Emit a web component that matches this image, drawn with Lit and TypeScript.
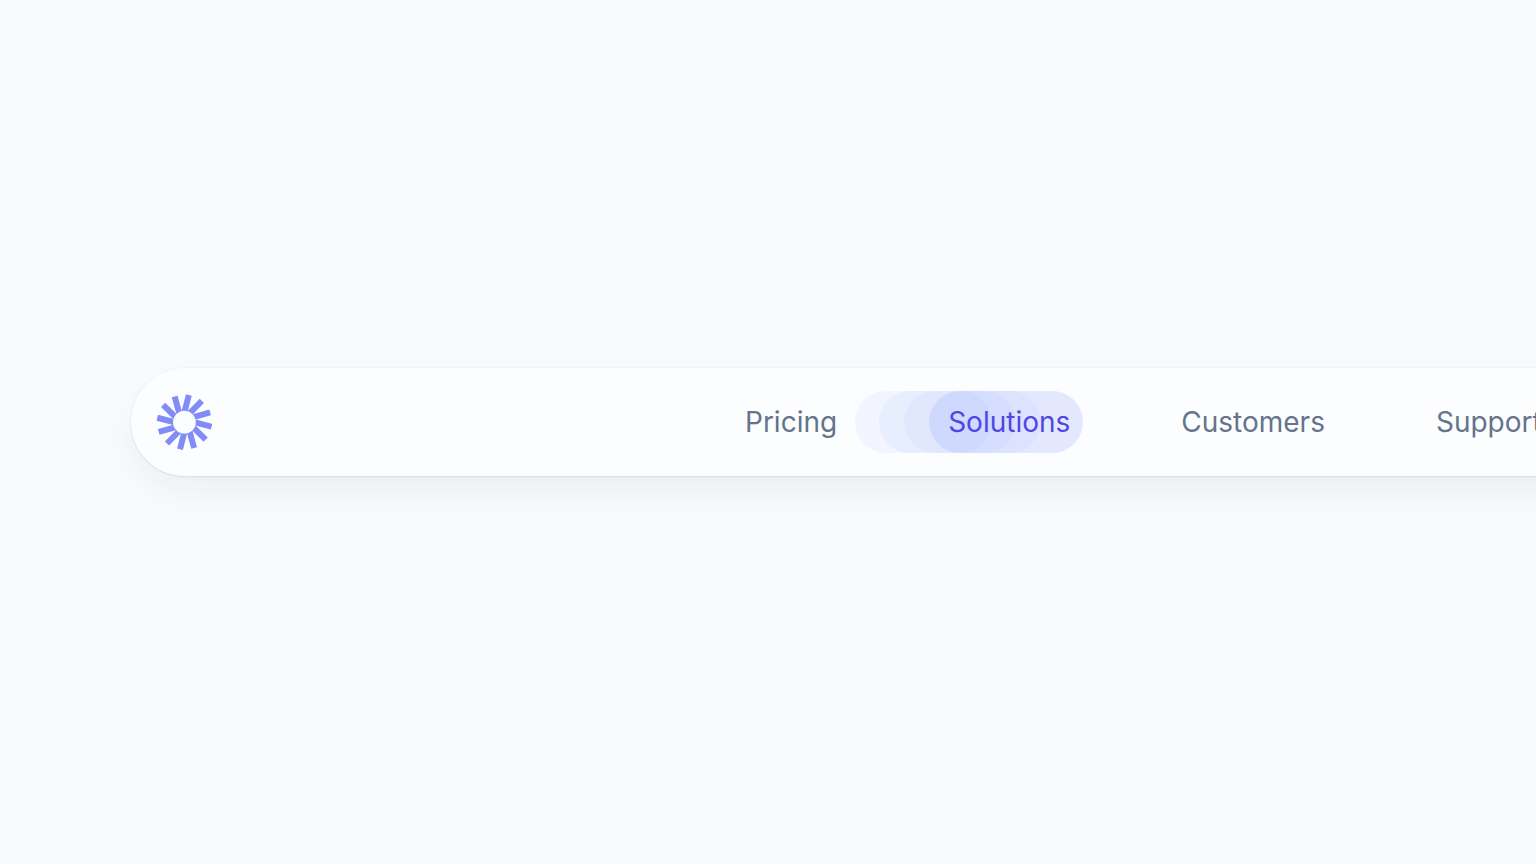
import { LitElement, html, svg, css } from "lit";
import { customElement, property } from "lit/decorators.js";

const RAYS = Array.from({ length: 12 }, (_, i) => 14.5 + i * 30);

@customElement("burst-logo")
class BurstLogo extends LitElement {
  static styles = css`
    :host {
      display: block;
      width: 56px;
      height: 56px;
    }
    .mark {
      display: block;
      width: 100%;
      height: 100%;
      fill: #818cf8;
    }
    .hub {
      fill: #fcfdff;
    }
  `;

  render() {
    return html`
      <svg class="mark" viewBox="-28.4 -28.2 56 56" aria-hidden="true">
        ${RAYS.map(
          (angle) => svg`<rect x="-5.5" y="-27.4" width="6" height="20" transform="rotate(${angle})" />`
        )}
        <circle class="hub" r="11.4" />
      </svg>
    `;
  }
}

@customElement("nav-link")
class NavLink extends LitElement {
  @property() label = "";
  @property({ type: Boolean }) active = false;

  static styles = css`
    :host {
      display: block;
      flex: none;
    }
    .link {
      display: block;
      position: relative;
      color: #64748b;
      line-height: 40px;
      text-decoration: none;
      white-space: nowrap;
    }
    .link.active {
      color: #4f46e5;
    }
    .text {
      position: relative;
    }
    .pill {
      position: absolute;
      top: -11px;
      bottom: -11px;
      left: -19px;
      right: -13px;
      border-radius: 31px;
      background: rgba(165, 184, 255, 0.29);
    }
    .trail {
      right: auto;
      width: 137px;
    }
    .far {
      left: -93px;
      background: rgba(165, 184, 255, 0.11);
    }
    .mid {
      left: -69px;
      background: rgba(165, 190, 245, 0.13);
    }
    .near {
      left: -44px;
      background: rgba(165, 180, 255, 0.09);
    }
  `;

  render() {
    return html`
      <a class="link ${this.active ? "active" : ""}" href="#${this.label.toLowerCase()}">
        ${this.active
          ? html`
              <span class="pill trail far"></span>
              <span class="pill trail mid"></span>
              <span class="pill trail near"></span>
              <span class="pill"></span>
            `
          : null}
        <span class="text">${this.label}</span>
      </a>
    `;
  }
}

@customElement("app-root")
class AppRoot extends LitElement {
  static styles = css`
    :host {
      display: grid;
      grid-template-columns: minmax(0, 1fr);
      align-items: center;
      box-sizing: border-box;
      min-height: 100vh;
      padding: 0 0 20px 131px;
      overflow: hidden;
      background: #f8fafc;
      font-family: Inter, "Liberation Sans", sans-serif;
      font-size: 28px;
      -webkit-font-smoothing: antialiased;
    }
    .bar {
      display: flex;
      align-items: center;
      box-sizing: border-box;
      width: 140%;
      padding: 26px 25px;
      border-radius: 54px;
      background: #fcfdff;
      box-shadow:
        0 0 0 1px rgba(15, 23, 42, 0.02),
        0 1px 2px rgba(51, 85, 136, 0.09),
        0 16px 36px -4px rgba(30, 30, 40, 0.06);
    }
    .home {
      flex: none;
    }
    .links {
      display: flex;
      gap: 111px;
      margin-left: 533px;
    }
  `;

  render() {
    return html`
      <nav class="bar" aria-label="Main">
        <a class="home" href="#home" aria-label="Home"><burst-logo></burst-logo></a>
        <div class="links">
          <nav-link label="Pricing"></nav-link>
          <nav-link label="Solutions" active></nav-link>
          <nav-link label="Customers"></nav-link>
          <nav-link label="Support"></nav-link>
        </div>
      </nav>
    `;
  }
}
